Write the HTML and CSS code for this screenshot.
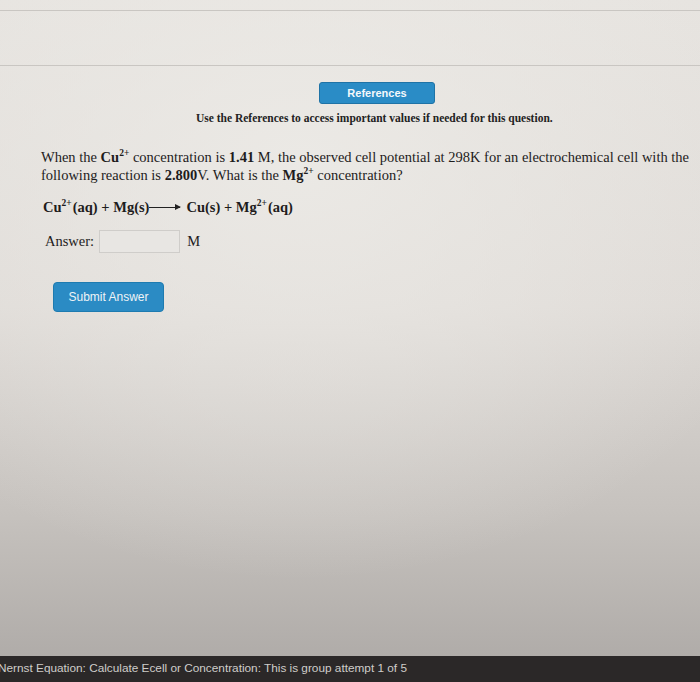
FILE: index.html
```html
<!DOCTYPE html>
<html>
<head>
<meta charset="utf-8">
<link rel="stylesheet" href="styles.css">
</head>
<body>
<div class="screen">
  <div class="topbar"></div>
  <div class="band"></div>
  <main class="content">
    <div class="refs">
      <button class="ref-btn">References</button>
      <p class="ref-note">Use the References to access important values if needed for this question.</p>
    </div>
    <p class="question">When the <b>Cu<sup>2+</sup></b> concentration is <b>1.41</b> M, the observed cell potential at 298K for an electrochemical cell with the following reaction is <b>2.800</b>V. What is the <b>Mg<sup>2+</sup></b> concentration?</p>
    <p class="equation">Cu<sup>2+</sup>(aq) + Mg(s)<span class="arrow"></span>Cu(s) + Mg<sup>2+</sup>(aq)</p>
    <div class="answer">
      <span class="label">Answer:</span>
      <span class="input"></span>
      <span class="unit">M</span>
    </div>
    <button class="submit">Submit Answer</button>
  </main>
  <footer class="footer">Nernst Equation: Calculate Ecell or Concentration: This is group attempt 1 of 5</footer>
</div>
</body>
</html>
```
FILE: styles.css
```css
html, body {
  margin: 0;
  padding: 0;
}
body {
  width: 700px;
  height: 682px;
  overflow: hidden;
}
.screen {
  width: 700px;
  height: 682px;
  display: flex;
  flex-direction: column;
  background:
    radial-gradient(ellipse 520px 420px at 300px 160px, rgba(236,234,230,0.9), rgba(236,234,230,0) 100%),
    linear-gradient(180deg, #e6e3df 0%, #dedad6 45%, #c6c2be 75%, #aca8a5 100%);
  font-family: "Liberation Serif", "Times New Roman", serif;
  color: #1e1c1c;
}
.topbar {
  height: 10px;
  border-bottom: 1px solid #c9c6c2;
  flex: none;
}
.band {
  height: 54px;
  border-bottom: 1px solid #c9c6c2;
  flex: none;
}
.content {
  flex: 1;
  padding: 16px 0 0 41px;
}
.refs {
  display: flex;
  flex-direction: column;
  align-items: flex-start;
  padding-left: 155px;
}
.ref-btn {
  margin: 0 0 0 123px;
  width: 116px;
  height: 22px;
  border: 1px solid #1f73a6;
  border-radius: 3px;
  background: #2a8cc6;
  color: #f4f8fb;
  font-family: "Liberation Sans", Arial, sans-serif;
  font-weight: bold;
  font-size: 11px;
  padding: 0;
}
.ref-note {
  margin: 8px 0 0 0;
  font-size: 11.5px;
  font-weight: bold;
  color: #222;
}
.question {
  margin: 24px 0 0 0;
  font-size: 14.5px;
  line-height: 18px;
  width: 655px;
}
sup {
  font-size: 9.5px;
  line-height: 0;
  vertical-align: 6px;
}
.equation {
  margin: 15px 0 0 2px;
  font-size: 14.5px;
  font-weight: bold;
}
.equation sup {
  margin-right: 1px;
}
.arrow {
  display: inline-block;
  width: 31px;
  height: 1px;
  background: #222;
  position: relative;
  vertical-align: 4px;
  margin: 0 6px 0 0;
}
.arrow::after {
  content: "";
  position: absolute;
  right: -1px;
  top: -3px;
  border-left: 6px solid #222;
  border-top: 3.5px solid transparent;
  border-bottom: 3.5px solid transparent;
}
.answer {
  margin: 14px 0 0 4px;
  display: flex;
  align-items: center;
  font-size: 14.5px;
}
.input {
  width: 79px;
  height: 21px;
  border: 1px solid #cfcdca;
  background: #e8e6e3;
  margin: 0 7px 0 5px;
}
.submit {
  margin: 29px 0 0 12px;
  width: 111px;
  height: 30px;
  border: 1px solid #1e7bb0;
  border-radius: 4px;
  background: #2b8bc4;
  color: #eef3f6;
  font-family: "Liberation Sans", Arial, sans-serif;
  font-size: 12px;
  padding: 0;
}
.footer {
  flex: none;
  height: 26px;
  background: #2b2828;
  color: #cfcdca;
  font-family: "Liberation Sans", Arial, sans-serif;
  font-size: 11.8px;
  line-height: 24px;
  padding-left: 0;
  text-indent: -2px;
  white-space: nowrap;
}
```
